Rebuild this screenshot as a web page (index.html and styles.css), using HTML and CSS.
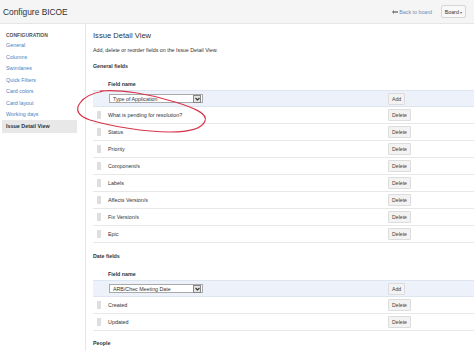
FILE: index.html
```html
<!DOCTYPE html>
<html lang="en">
<head>
    <meta charset="UTF-8">
    <meta name="viewport" content="width=device-width, initial-scale=1.0">
    <title>Configure BICOE</title>
    <link rel="stylesheet" href="styles.css">
</head>
<body>
    <header class="top-bar">
        <h1 class="board-title">Configure BICOE</h1>
        <div class="top-actions">
            <a class="back-link" href="#">
                <svg class="back-icon" width="6" height="4" viewBox="0 0 6 4"><path d="M0 2 L2 0 L2 1.3 L6 1.3 L6 2.7 L2 2.7 L2 4 Z" fill="#777"/></svg>
                Back to board
            </a>
            <button class="board-button">Board <span class="caret">&#9662;</span></button>
        </div>
    </header>

    <div class="layout">
        <aside class="sidebar">
            <div class="sidebar-heading">CONFIGURATION</div>
            <ul class="nav-list">
                <li class="nav-item"><a href="#">General</a></li>
                <li class="nav-item"><a href="#">Columns</a></li>
                <li class="nav-item"><a href="#">Swimlanes</a></li>
                <li class="nav-item"><a href="#">Quick Filters</a></li>
                <li class="nav-item"><a href="#">Card colors</a></li>
                <li class="nav-item"><a href="#">Card layout</a></li>
                <li class="nav-item"><a href="#">Working days</a></li>
                <li class="nav-item active">Issue Detail View</li>
            </ul>
        </aside>

        <main class="content">
            <h2 class="page-title">Issue Detail View</h2>
            <p class="page-desc">Add, delete or reorder fields on the Issue Detail View.</p>

            <h3 class="section-title">General fields</h3>
            <div class="fields-head">Field name</div>
            <div class="add-row">
                <div class="select-box">
                    <span>Type of Application</span>
                    <span class="select-arrow"><svg width="5" height="4" viewBox="0 0 5 4"><path d="M0.5 1 L2.5 3 L4.5 1" fill="none" stroke="#333" stroke-width="1.1"/></svg></span>
                </div>
                <div class="action-cell"><button class="small-button">Add</button></div>
            </div>
            <div class="field-row"><span class="drag-handle"></span><span class="field-name">What is pending for resolution?</span><div class="action-cell"><button class="small-button">Delete</button></div></div>
            <div class="field-row"><span class="drag-handle"></span><span class="field-name">Status</span><div class="action-cell"><button class="small-button">Delete</button></div></div>
            <div class="field-row"><span class="drag-handle"></span><span class="field-name">Priority</span><div class="action-cell"><button class="small-button">Delete</button></div></div>
            <div class="field-row"><span class="drag-handle"></span><span class="field-name">Component/s</span><div class="action-cell"><button class="small-button">Delete</button></div></div>
            <div class="field-row"><span class="drag-handle"></span><span class="field-name">Labels</span><div class="action-cell"><button class="small-button">Delete</button></div></div>
            <div class="field-row"><span class="drag-handle"></span><span class="field-name">Affects Version/s</span><div class="action-cell"><button class="small-button">Delete</button></div></div>
            <div class="field-row"><span class="drag-handle"></span><span class="field-name">Fix Version/s</span><div class="action-cell"><button class="small-button">Delete</button></div></div>
            <div class="field-row"><span class="drag-handle"></span><span class="field-name">Epic</span><div class="action-cell"><button class="small-button">Delete</button></div></div>

            <h3 class="section-title date-title">Date fields</h3>
            <div class="fields-head">Field name</div>
            <div class="add-row">
                <div class="select-box">
                    <span>ARB/Chec Meeting Date</span>
                    <span class="select-arrow"><svg width="5" height="4" viewBox="0 0 5 4"><path d="M0.5 1 L2.5 3 L4.5 1" fill="none" stroke="#333" stroke-width="1.1"/></svg></span>
                </div>
                <div class="action-cell"><button class="small-button">Add</button></div>
            </div>
            <div class="field-row"><span class="drag-handle"></span><span class="field-name">Created</span><div class="action-cell"><button class="small-button">Delete</button></div></div>
            <div class="field-row"><span class="drag-handle"></span><span class="field-name">Updated</span><div class="action-cell"><button class="small-button">Delete</button></div></div>

            <h3 class="section-title">People</h3>
        </main>
    </div>

    <!-- hand-drawn annotation over the first rows -->
    <svg class="annotation" width="474" height="351" viewBox="0 0 474 351">
        <path d="M100 91 C120 89, 150 94, 175 102 C195 108, 208 114, 205 121 C202 129, 190 132, 170 132 C145 132, 110 126, 90 120 C78 116, 75 110, 80 103 C84 97, 92 93, 104 91" fill="none" stroke="#d8344a" stroke-width="1.2"/>
    </svg>
</body>
</html>
```

FILE: styles.css
```css
body {
    margin: 0;
    font-family: "Liberation Sans", Arial, sans-serif;
    color: #333;
    background: #fff;
    position: relative;
    overflow: hidden;
}
a {
    color: #4a7fc1;
    text-decoration: none;
}
.top-bar {
    height: 23px;
    border-bottom: 1px solid #e6e6e6;
    background-color: #f5f5f5;
    display: flex;
    align-items: center;
    justify-content: space-between;
    padding: 0 8px 0 3px;
}
.board-title {
    margin: 0;
    font-size: 8.4px;
    font-weight: normal;
    color: #333;
}
.top-actions {
    display: flex;
    align-items: center;
    gap: 9px;
}
.back-link {
    font-size: 5.3px;
    color: #6f8fb8;
    display: flex;
    align-items: center;
    gap: 1px;
}
.board-button {
    height: 13px;
    width: 25px;
    padding: 0;
    font-family: inherit;
    font-size: 5.3px;
    color: #333;
    background: #f8f8f8;
    border: 1px solid #d6d6d6;
    border-radius: 2px;
}
.caret {
    font-size: 4px;
    color: #666;
}
.layout {
    display: flex;
    min-height: 327px;
}
.sidebar {
    width: 75px;
    padding: 7px 8px 0 2px;
    border-right: 1px solid #e6e6e6;
}
.sidebar-heading {
    font-size: 5px;
    font-weight: bold;
    line-height: 8px;
    color: #555;
    padding-left: 4px;
}
.nav-list {
    list-style: none;
    margin: 1px 0 0 0;
    padding: 0;
}
.nav-item {
    height: 11.5px;
    line-height: 11.5px;
    padding-left: 4px;
    font-size: 5.4px;
}
.nav-item.active {
    height: 13px;
    line-height: 13px;
    margin: -0.75px 0;
    background-color: #e8e8e8;
    font-weight: bold;
    color: #333;
}
.content {
    flex: 1;
    padding-left: 7px;
}
.page-title {
    margin: 7px 0 0 0;
    font-size: 7.6px;
    font-weight: normal;
    line-height: 10px;
}
.page-desc {
    margin: 5px 0 0 0;
    font-size: 5.3px;
    line-height: 8px;
}
.section-title {
    margin: 8px 0 0 0;
    font-size: 5.3px;
    line-height: 8px;
    font-weight: bold;
}
.date-title {
    margin-top: 9px;
}
.fields-head {
    margin-top: 4px;
    height: 16px;
    box-sizing: border-box;
    padding: 0 0 2px 15px;
    display: flex;
    align-items: flex-end;
    font-size: 5.3px;
    line-height: 8px;
    font-weight: bold;
}
.add-row {
    height: 17px;
    box-sizing: border-box;
    display: flex;
    align-items: center;
    padding-left: 16px;
    background-color: #edf2fa;
    border-top: 1px solid #dde5f1;
    border-bottom: 1px solid #dde5f1;
}
.select-box {
    width: 94px;
    height: 9px;
    box-sizing: border-box;
    display: flex;
    align-items: center;
    justify-content: space-between;
    padding: 0 1px 0 3px;
    background: #fff;
    border: 1px solid #a9a9a9;
    font-size: 5.3px;
}
.select-arrow {
    width: 6px;
    height: 6px;
    display: flex;
    align-items: center;
    justify-content: center;
    background: #e4e4e4;
    border: 0.5px solid #888;
}
.action-cell {
    margin-left: auto;
    width: 86px;
    display: flex;
    align-items: center;
}
.small-button {
    height: 12px;
    padding: 0 3px;
    font-family: inherit;
    font-size: 5.2px;
    color: #444;
    background: #f3f3f3;
    border: 1px solid #dcdcdc;
    border-radius: 1px;
}
.field-row {
    height: 17px;
    box-sizing: border-box;
    display: flex;
    align-items: center;
    padding-left: 4px;
    border-bottom: 1px solid #e8e8e8;
    font-size: 5.4px;
}
.drag-handle {
    width: 4px;
    height: 8px;
    background-color: #dedede;
    margin-right: 7px;
}
.annotation {
    position: absolute;
    top: 0;
    left: 0;
    pointer-events: none;
}
```
